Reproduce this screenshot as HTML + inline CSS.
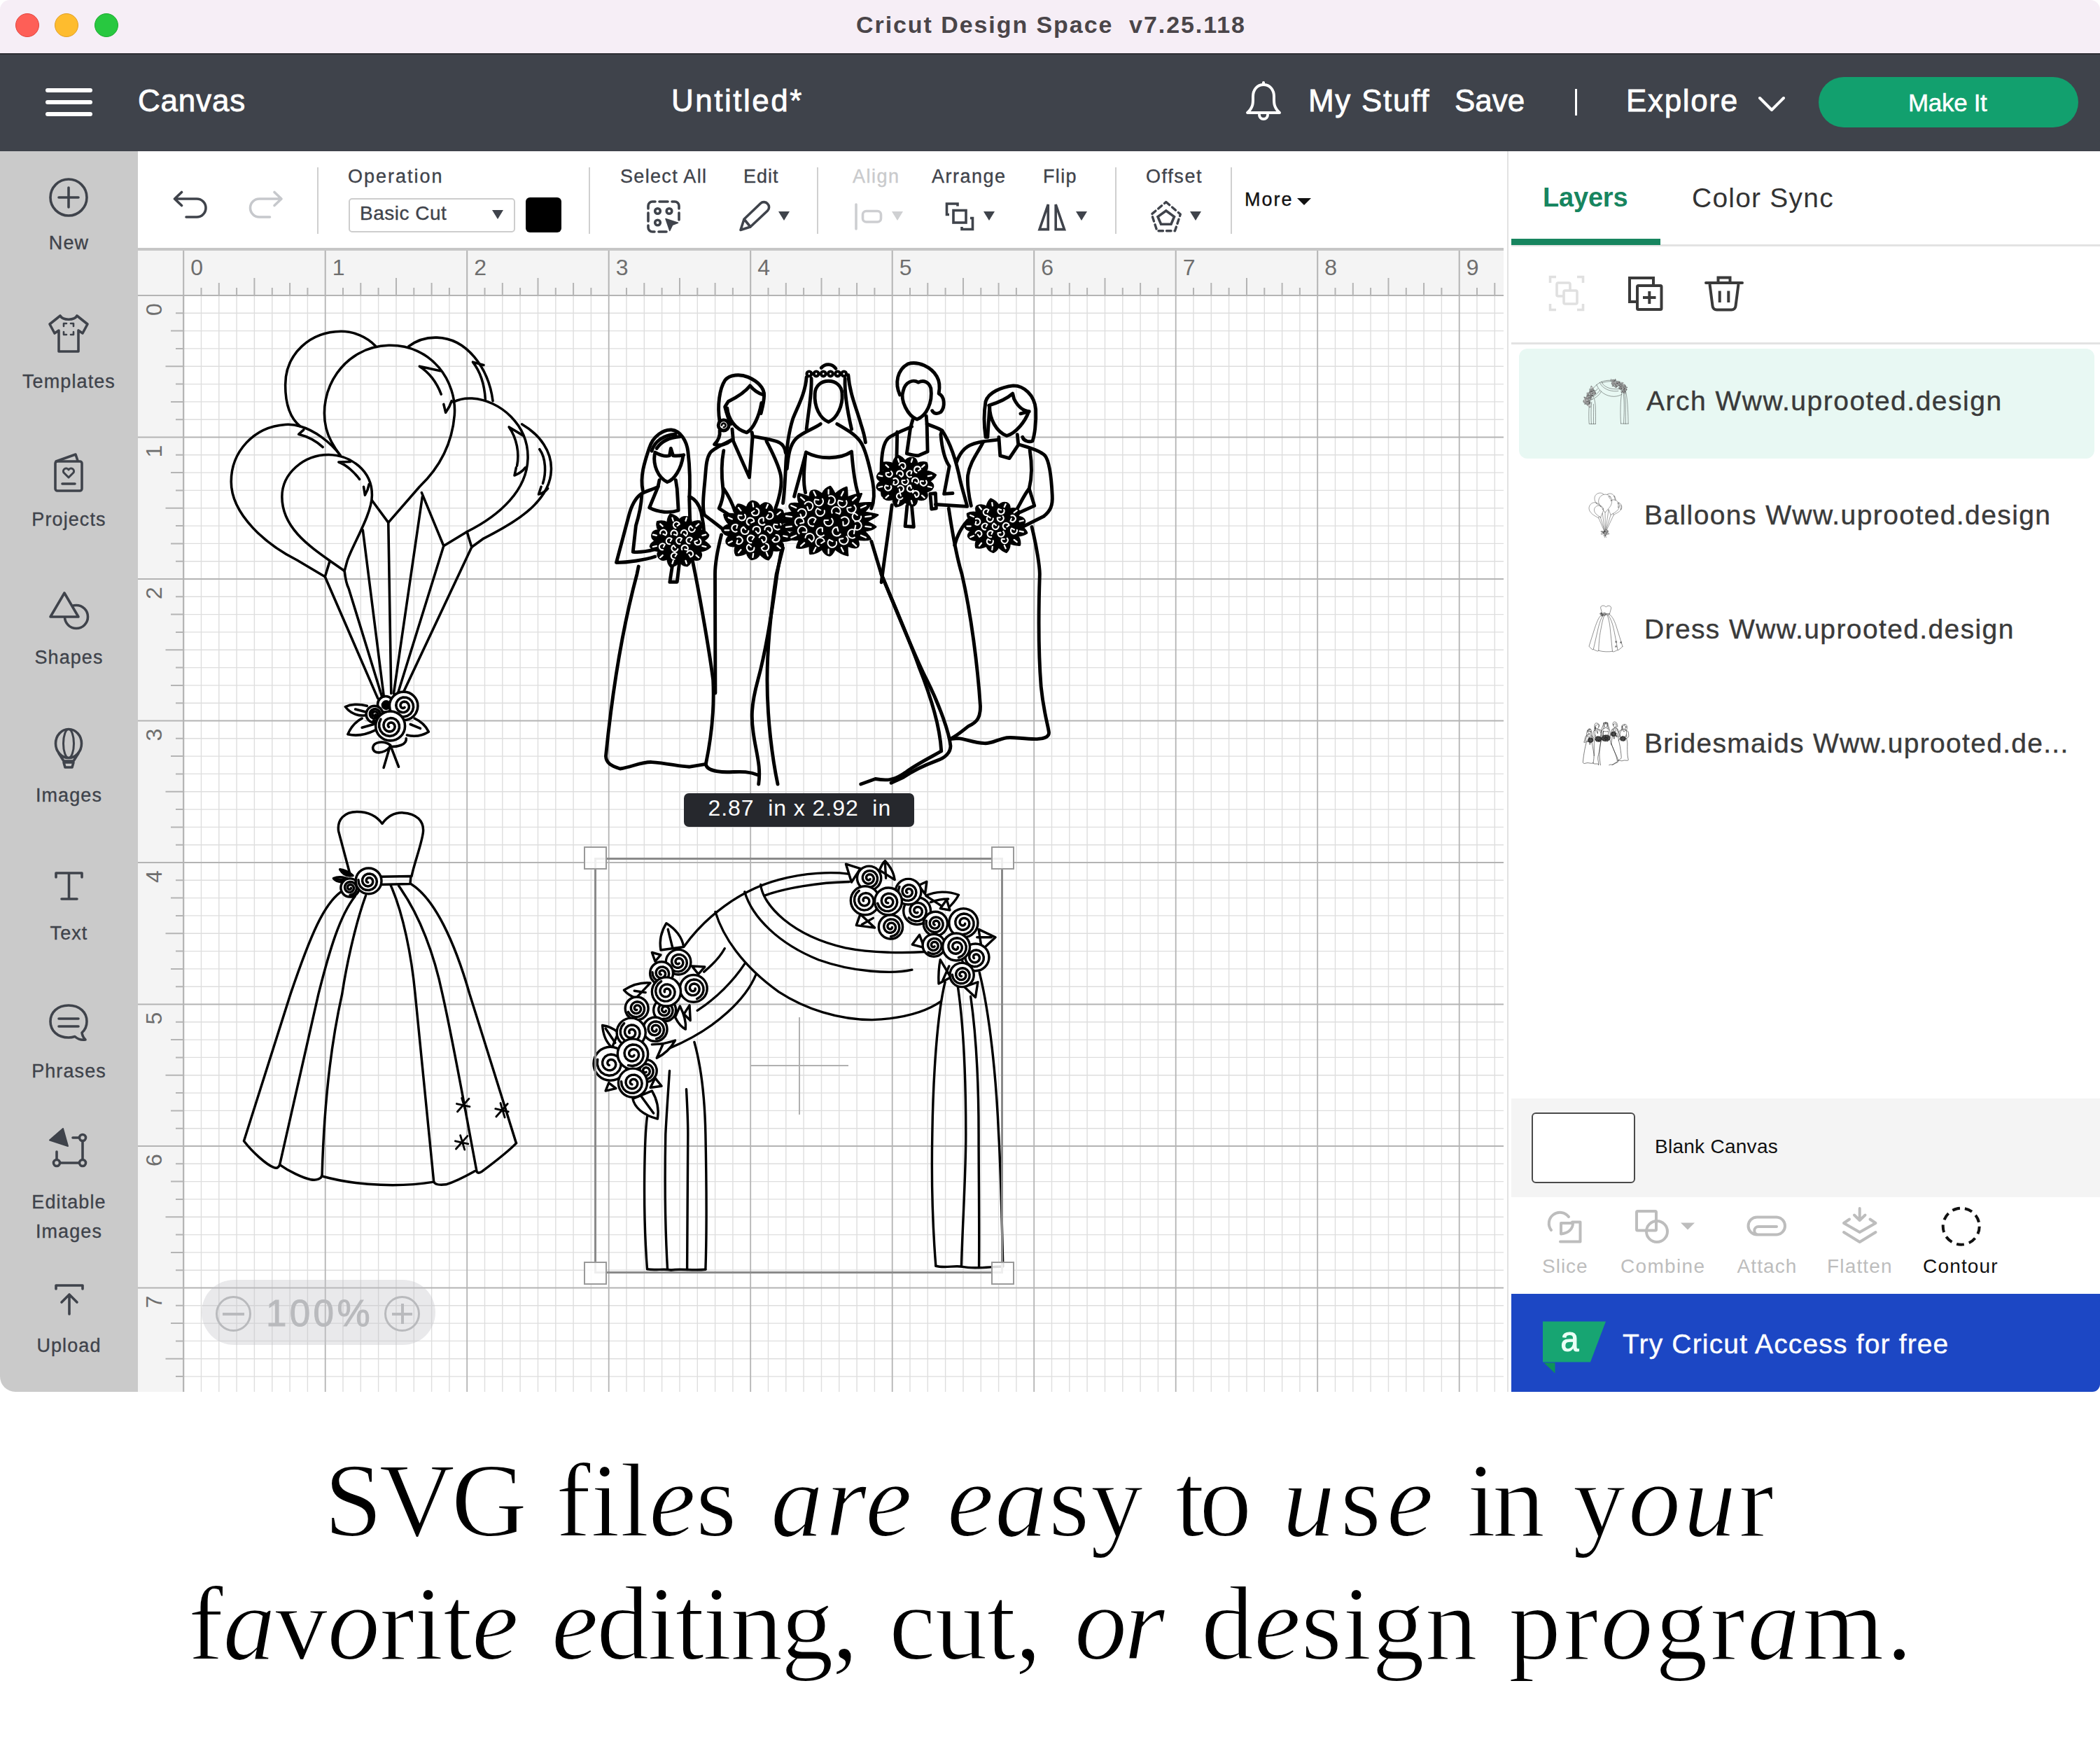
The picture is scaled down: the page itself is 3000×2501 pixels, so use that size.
<!DOCTYPE html>
<html lang="en">
<head>
<meta charset="utf-8">
<title>Cricut Design Space</title>
<style>
*{box-sizing:border-box;margin:0;padding:0}
html,body{width:3000px;height:2501px;overflow:hidden;background:#fff}
body{position:relative;font-family:"Liberation Sans",sans-serif;color:#3f434b}
.abs{position:absolute}
.t{position:absolute;white-space:nowrap;line-height:1}
#titlebar{left:0;top:0;width:3000px;height:76px;background:#f6eef6;border-radius:14px 14px 0 0}
.tl{position:absolute;width:34px;height:34px;border-radius:50%;top:19px}
#header{left:0;top:76px;width:3000px;height:140px;background:#3f434b;border-top:2px solid #2c2e33}
#sidebar{left:0;top:216px;width:197px;height:1772px;background:#cacaca;border-radius:0 0 0 22px}
.sl{position:absolute;left:0;width:197px;text-align:center;font-size:27px;line-height:1;color:#3f434b;letter-spacing:1.1px}
#toolbar{left:197px;top:216px;width:1956px;height:139px;background:#fff}
.sep{position:absolute;width:2px;height:95px;top:239px;background:#cfcfcf}
.tbl{position:absolute;font-size:27px;line-height:1;color:#3f434b;white-space:nowrap}
.tri{position:absolute;width:0;height:0;border-left:8px solid transparent;border-right:8px solid transparent;border-top:13px solid #3f434b}
#panel{left:2153px;top:216px;width:847px;height:1772px;background:#fff;border-left:2px solid #e2e2e2}
.lay{position:absolute;left:2352px;font-size:39px;line-height:1;color:#3a3a3a;white-space:nowrap}
.act{position:absolute;font-size:28px;line-height:1;color:#bdbdbd;white-space:nowrap}
.hnd{width:33px;height:33px;background:rgba(255,255,255,.85);border:2.5px solid #9a9a9a}
.cap{font-family:'Liberation Serif',serif;font-size:150px;color:#000;-webkit-text-stroke:2px #fff}
.hd{-webkit-text-stroke:.8px #fff}
.sl,.tbl{-webkit-text-stroke:.35px #3f434b}
.lay{-webkit-text-stroke:.4px #3a3a3a}
</style>
</head>
<body>
<!-- ===== title bar ===== -->
<div id="titlebar" class="abs">
  <div class="tl" style="left:22px;background:#fe5f57;border:1px solid #e2463f"></div>
  <div class="tl" style="left:78px;background:#febc2e;border:1px solid #e0a028"></div>
  <div class="tl" style="left:135px;background:#28c840;border:1px solid #1fab31"></div>
  <div class="t" id="ttl" style="left:1223px;top:18px;font-size:34px;font-weight:bold;color:#4a4549;white-space:pre;letter-spacing:1.93px">Cricut Design Space  v7.25.118</div>
</div>
<!-- ===== header ===== -->
<div id="header" class="abs"></div>
<div class="abs" style="left:65px;top:126px;width:67px;height:6px;border-radius:3px;background:#fff"></div>
<div class="abs" style="left:65px;top:143px;width:67px;height:6px;border-radius:3px;background:#fff"></div>
<div class="abs" style="left:65px;top:160px;width:67px;height:6px;border-radius:3px;background:#fff"></div>
<div class="t hd" id="h_canvas" style="left:197px;top:122px;font-size:44px;color:#fff;letter-spacing:0.80px">Canvas</div>
<div class="t hd" id="h_untitled" style="left:959px;top:122px;font-size:44px;color:#fff;letter-spacing:2.50px">Untitled*</div>
<div class="t hd" id="h_mystuff" style="left:1869px;top:122px;font-size:44px;color:#fff;letter-spacing:1.71px">My Stuff</div>
<div class="t hd" id="h_save" style="left:2078px;top:122px;font-size:44px;color:#fff;letter-spacing:0.00px">Save</div>
<div class="abs" style="left:2250px;top:127px;width:3px;height:38px;background:#fff"></div>
<div class="t hd" id="h_explore" style="left:2323px;top:122px;font-size:44px;color:#fff;letter-spacing:1.67px">Explore</div>
<div class="abs" id="makeit" style="left:2598px;top:110px;width:371px;height:72px;border-radius:36px;background:#12a06e"></div>
<div class="t" id="h_makeit" style="left:2726px;top:129px;font-size:35px;color:#fff;-webkit-text-stroke:.5px #fff;letter-spacing:-0.33px">Make It</div>
<!-- ===== sidebar ===== -->
<div id="sidebar" class="abs"></div>
<div class="sl" style="top:334px">New</div>
<div class="sl" style="top:532px">Templates</div>
<div class="sl" style="top:729px">Projects</div>
<div class="sl" style="top:926px">Shapes</div>
<div class="sl" style="top:1123px">Images</div>
<div class="sl" style="top:1320px">Text</div>
<div class="sl" style="top:1517px">Phrases</div>
<div class="sl" style="top:1704px">Editable</div>
<div class="sl" style="top:1746px">Images</div>
<div class="sl" style="top:1909px">Upload</div>
<!-- ===== toolbar ===== -->
<div id="toolbar" class="abs"></div>
<div class="sep" style="left:453px"></div>
<div class="sep" style="left:841px"></div>
<div class="sep" style="left:1167px"></div>
<div class="sep" style="left:1593px"></div>
<div class="sep" style="left:1758px"></div>
<div class="tbl" id="tb_op" style="left:497px;top:239px;letter-spacing:2.00px">Operation</div>
<div class="abs" style="left:498px;top:283px;width:238px;height:49px;border:2px solid #cdcdcd;border-radius:5px;background:#fff"></div>
<div class="tbl" id="tb_bc" style="left:514px;top:291px;font-size:28px;letter-spacing:0.50px">Basic Cut</div>
<div class="tri" style="left:703px;top:300px"></div>
<div class="abs" style="left:751px;top:282px;width:51px;height:50px;border-radius:6px;background:#000"></div>
<div class="tbl" id="tb_sa" style="left:886px;top:239px;letter-spacing:1.33px">Select All</div>
<div class="tbl" id="tb_ed" style="left:1062px;top:239px;letter-spacing:1.00px">Edit</div>
<div class="tri" style="left:1112px;top:302px"></div>
<div class="tbl" id="tb_al" style="left:1218px;top:239px;color:#c9cacc;-webkit-text-stroke-color:#c9cacc;letter-spacing:1.50px">Align</div>
<div class="tri" style="left:1274px;top:302px;border-top-color:#cfd0d2"></div>
<div class="tbl" id="tb_ar" style="left:1331px;top:239px;letter-spacing:1.50px">Arrange</div>
<div class="tri" style="left:1405px;top:302px"></div>
<div class="tbl" id="tb_fl" style="left:1490px;top:239px;letter-spacing:1.33px">Flip</div>
<div class="tri" style="left:1537px;top:302px"></div>
<div class="tbl" id="tb_of" style="left:1637px;top:239px;letter-spacing:1.60px">Offset</div>
<div class="tri" style="left:1700px;top:302px"></div>
<div class="tbl" id="tb_mo" style="-webkit-text-stroke-color:#111;left:1778px;top:272px;color:#111;letter-spacing:2.00px">More</div>
<div class="tri" style="left:1853px;top:283px;border-top-color:#111;border-left-width:10px;border-right-width:10px;border-top-width:10px"></div>
<svg class="abs" style="left:0;top:0" width="3000" height="2501" viewBox="0 0 3000 2501" shape-rendering="auto">
<rect x="197" y="354" width="1951" height="4" fill="#c6c6c6"/>
<rect x="197" y="358" width="1951" height="1630" fill="#fff"/>
<rect x="197" y="358" width="1951" height="64.0" fill="#f4f4f4"/>
<rect x="197" y="358" width="65.19999999999999" height="1630" fill="#f4f4f4"/>
<path d="M287.5 422.0V1988M312.8 422.0V1988M338.1 422.0V1988M363.4 422.0V1988M388.8 422.0V1988M414.1 422.0V1988M439.4 422.0V1988M490.0 422.0V1988M515.3 422.0V1988M540.6 422.0V1988M566.0 422.0V1988M591.3 422.0V1988M616.6 422.0V1988M641.9 422.0V1988M692.5 422.0V1988M717.8 422.0V1988M743.1 422.0V1988M768.5 422.0V1988M793.8 422.0V1988M819.1 422.0V1988M844.4 422.0V1988M895.0 422.0V1988M920.3 422.0V1988M945.6 422.0V1988M971.0 422.0V1988M996.3 422.0V1988M1021.6 422.0V1988M1046.9 422.0V1988M1097.5 422.0V1988M1122.8 422.0V1988M1148.1 422.0V1988M1173.5 422.0V1988M1198.8 422.0V1988M1224.1 422.0V1988M1249.4 422.0V1988M1300.0 422.0V1988M1325.3 422.0V1988M1350.6 422.0V1988M1376.0 422.0V1988M1401.3 422.0V1988M1426.6 422.0V1988M1451.9 422.0V1988M1502.5 422.0V1988M1527.8 422.0V1988M1553.1 422.0V1988M1578.5 422.0V1988M1603.8 422.0V1988M1629.1 422.0V1988M1654.4 422.0V1988M1705.0 422.0V1988M1730.3 422.0V1988M1755.6 422.0V1988M1781.0 422.0V1988M1806.3 422.0V1988M1831.6 422.0V1988M1856.9 422.0V1988M1907.5 422.0V1988M1932.8 422.0V1988M1958.1 422.0V1988M1983.5 422.0V1988M2008.8 422.0V1988M2034.1 422.0V1988M2059.4 422.0V1988M2110.0 422.0V1988M2135.3 422.0V1988M262.2 447.3H2148M262.2 472.6H2148M262.2 497.9H2148M262.2 523.2H2148M262.2 548.6H2148M262.2 573.9H2148M262.2 599.2H2148M262.2 649.8H2148M262.2 675.1H2148M262.2 700.4H2148M262.2 725.8H2148M262.2 751.1H2148M262.2 776.4H2148M262.2 801.7H2148M262.2 852.3H2148M262.2 877.6H2148M262.2 902.9H2148M262.2 928.2H2148M262.2 953.6H2148M262.2 978.9H2148M262.2 1004.2H2148M262.2 1054.8H2148M262.2 1080.1H2148M262.2 1105.4H2148M262.2 1130.8H2148M262.2 1156.1H2148M262.2 1181.4H2148M262.2 1206.7H2148M262.2 1257.3H2148M262.2 1282.6H2148M262.2 1307.9H2148M262.2 1333.2H2148M262.2 1358.6H2148M262.2 1383.9H2148M262.2 1409.2H2148M262.2 1459.8H2148M262.2 1485.1H2148M262.2 1510.4H2148M262.2 1535.8H2148M262.2 1561.1H2148M262.2 1586.4H2148M262.2 1611.7H2148M262.2 1662.3H2148M262.2 1687.6H2148M262.2 1712.9H2148M262.2 1738.2H2148M262.2 1763.6H2148M262.2 1788.9H2148M262.2 1814.2H2148M262.2 1864.8H2148M262.2 1890.1H2148M262.2 1915.4H2148M262.2 1940.8H2148M262.2 1966.1H2148" stroke="#dedede" stroke-width="1.4" fill="none"/>
<path d="M262.2 422.0V1988M464.7 422.0V1988M667.2 422.0V1988M869.7 422.0V1988M1072.2 422.0V1988M1274.7 422.0V1988M1477.2 422.0V1988M1679.7 422.0V1988M1882.2 422.0V1988M2084.7 422.0V1988M262.2 422.0H2148M262.2 624.5H2148M262.2 827.0H2148M262.2 1029.5H2148M262.2 1232.0H2148M262.2 1434.5H2148M262.2 1637.0H2148M262.2 1839.5H2148" stroke="#b4b4b4" stroke-width="1.8" fill="none"/>
<path d="M262.2 358V422.0M287.5 411V422.0M312.8 404V422.0M338.1 411V422.0M363.4 397V422.0M388.8 411V422.0M414.1 404V422.0M439.4 411V422.0M464.7 358V422.0M490.0 411V422.0M515.3 404V422.0M540.6 411V422.0M566.0 397V422.0M591.3 411V422.0M616.6 404V422.0M641.9 411V422.0M667.2 358V422.0M692.5 411V422.0M717.8 404V422.0M743.1 411V422.0M768.5 397V422.0M793.8 411V422.0M819.1 404V422.0M844.4 411V422.0M869.7 358V422.0M895.0 411V422.0M920.3 404V422.0M945.6 411V422.0M971.0 397V422.0M996.3 411V422.0M1021.6 404V422.0M1046.9 411V422.0M1072.2 358V422.0M1097.5 411V422.0M1122.8 404V422.0M1148.1 411V422.0M1173.5 397V422.0M1198.8 411V422.0M1224.1 404V422.0M1249.4 411V422.0M1274.7 358V422.0M1300.0 411V422.0M1325.3 404V422.0M1350.6 411V422.0M1376.0 397V422.0M1401.3 411V422.0M1426.6 404V422.0M1451.9 411V422.0M1477.2 358V422.0M1502.5 411V422.0M1527.8 404V422.0M1553.1 411V422.0M1578.5 397V422.0M1603.8 411V422.0M1629.1 404V422.0M1654.4 411V422.0M1679.7 358V422.0M1705.0 411V422.0M1730.3 404V422.0M1755.6 411V422.0M1781.0 397V422.0M1806.3 411V422.0M1831.6 404V422.0M1856.9 411V422.0M1882.2 358V422.0M1907.5 411V422.0M1932.8 404V422.0M1958.1 411V422.0M1983.5 397V422.0M2008.8 411V422.0M2034.1 404V422.0M2059.4 411V422.0M2084.7 358V422.0M2110.0 411V422.0M2135.3 404V422.0M197 422.0H262.2M251 447.3H262.2M244 472.6H262.2M251 497.9H262.2M236.5 523.2H262.2M251 548.6H262.2M244 573.9H262.2M251 599.2H262.2M197 624.5H262.2M251 649.8H262.2M244 675.1H262.2M251 700.4H262.2M236.5 725.8H262.2M251 751.1H262.2M244 776.4H262.2M251 801.7H262.2M197 827.0H262.2M251 852.3H262.2M244 877.6H262.2M251 902.9H262.2M236.5 928.2H262.2M251 953.6H262.2M244 978.9H262.2M251 1004.2H262.2M197 1029.5H262.2M251 1054.8H262.2M244 1080.1H262.2M251 1105.4H262.2M236.5 1130.8H262.2M251 1156.1H262.2M244 1181.4H262.2M251 1206.7H262.2M197 1232.0H262.2M251 1257.3H262.2M244 1282.6H262.2M251 1307.9H262.2M236.5 1333.2H262.2M251 1358.6H262.2M244 1383.9H262.2M251 1409.2H262.2M197 1434.5H262.2M251 1459.8H262.2M244 1485.1H262.2M251 1510.4H262.2M236.5 1535.8H262.2M251 1561.1H262.2M244 1586.4H262.2M251 1611.7H262.2M197 1637.0H262.2M251 1662.3H262.2M244 1687.6H262.2M251 1712.9H262.2M236.5 1738.2H262.2M251 1763.6H262.2M244 1788.9H262.2M251 1814.2H262.2M197 1839.5H262.2M251 1864.8H262.2M244 1890.1H262.2M251 1915.4H262.2M236.5 1940.8H262.2M251 1966.1H262.2M197 422.0H2148M262.2 358V1988" stroke="#b4b4b4" stroke-width="2" fill="none"/>
<g font-family="Liberation Sans, sans-serif" font-size="32" fill="#6e6e6e">
<text x="272.2" y="393">0</text>
<text x="474.7" y="393">1</text>
<text x="677.2" y="393">2</text>
<text x="879.7" y="393">3</text>
<text x="1082.2" y="393">4</text>
<text x="1284.7" y="393">5</text>
<text x="1487.2" y="393">6</text>
<text x="1689.7" y="393">7</text>
<text x="1892.2" y="393">8</text>
<text x="2094.7" y="393">9</text>
<text transform="translate(231 451.0) rotate(-90)">0</text>
<text transform="translate(231 653.5) rotate(-90)">1</text>
<text transform="translate(231 856.0) rotate(-90)">2</text>
<text transform="translate(231 1058.5) rotate(-90)">3</text>
<text transform="translate(231 1261.0) rotate(-90)">4</text>
<text transform="translate(231 1463.5) rotate(-90)">5</text>
<text transform="translate(231 1666.0) rotate(-90)">6</text>
<text transform="translate(231 1868.5) rotate(-90)">7</text>
</g>
</svg>
<!-- ===== canvas art ===== -->
<svg class="abs" style="left:0;top:0" width="3000" height="2501" viewBox="0 0 3000 2501">
<g id="artBal" transform="translate(310 450) scale(0.238095)" stroke="#000" stroke-width="15" fill="none" stroke-linecap="round" stroke-linejoin="round">
<path d="M950 185 C900 130 820 98 745 98 C560 100 410 230 410 420 C410 530 440 620 500 668"/>
<path d="M1150 188 C1200 150 1260 133 1320 135 C1500 140 1630 320 1655 515"/>
<path d="M1600 300 L1535 282 C1580 340 1605 420 1610 505"/>
<path d="M740 842 C700 790 670 740 655 680 C600 450 760 190 1030 182 C1290 176 1440 400 1425 600 C1410 780 1330 920 1215 1030 L1028 1245 L930 1112"/>
<path d="M1340 335 L1215 308 C1280 350 1320 410 1345 475"/>
<path d="M1360 535 L1372 585 C1390 560 1400 540 1408 515"/>
<path d="M1418 522 C1450 505 1490 498 1530 500 C1700 510 1870 660 1865 860 C1860 1050 1700 1200 1500 1300 L1360 1385 L1228 1065"/>
<path d="M1835 722 L1752 672 C1800 740 1815 830 1800 905"/>
<path d="M1795 915 L1785 962 C1815 950 1835 935 1850 915"/>
<path d="M1830 655 C1940 720 2010 820 2005 930 C2000 1130 1760 1260 1600 1340 L1528 1392 L1500 1300"/>
<path d="M1935 805 C1975 860 1975 950 1955 1010"/>
<path d="M1945 1030 L1930 1075 C1950 1070 1970 1060 1985 1040"/>
<path d="M740 842 C680 760 580 690 500 668 C470 658 440 655 410 657 C220 670 85 820 85 1000 C85 1200 300 1380 480 1470 L648 1570 L675 1482"/>
<path d="M520 688 L490 715 C550 730 600 760 635 792"/>
<path d="M765 1535 L700 1490 C560 1390 390 1280 390 1090 C390 950 520 838 670 838 C800 840 930 930 930 1080 C930 1200 800 1400 780 1480 Z"/>
<path d="M800 880 L730 882 C780 900 830 950 855 985"/>
<path d="M880 1030 L888 1080 C900 1060 908 1040 912 1015"/>
<path d="M648 1570 L965 2300"/>
<path d="M765 1535 C770 1580 780 1620 790 1640 L990 2290"/>
<path d="M875 1290 L1000 2280"/>
<path d="M1028 1245 L1045 2270"/>
<path d="M1232 1090 L1060 2270"/>
<path d="M1360 1385 L1085 2270"/>
<path d="M1528 1392 L1120 2260"/>
<path d="M900 2345 C850 2330 800 2335 770 2350 C800 2390 850 2410 895 2400" fill="#fff"/><path d="M830 2365 L890 2380"/>
<path d="M870 2420 C830 2440 800 2480 785 2515 C850 2530 910 2510 950 2490" fill="#fff"/><path d="M870 2475 L940 2455"/>
<path d="M1185 2420 C1230 2440 1255 2470 1270 2500 C1230 2525 1180 2530 1140 2520" fill="#fff"/><path d="M1160 2455 L1220 2480"/>
<path d="M1040 2580 C1000 2550 940 2560 935 2595 C935 2635 1000 2635 1040 2590 C1080 2590 1140 2580 1135 2540 M1040 2580 L1000 2715 M1040 2580 L1090 2710"/>
<circle cx="1012" cy="2335" r="48" fill="#fff"/><circle cx="1015" cy="2340" r="22" fill="#000"/>
<circle cx="945" cy="2395" r="50" fill="#fff"/><path d="M950.3 2397.9L949.5 2400.2L947.7 2402.2L945.1 2403.6L941.8 2403.9L938.3 2402.9L935.2 2400.5L933.1 2396.9L932.3 2392.5L933.2 2387.8L935.9 2383.4L940.2 2380.2L945.7 2378.6L951.7 2379.0L957.4 2381.7L962.0 2386.4L964.8 2392.8L965.2 2400.0L962.9 2407.2L958.1 2413.4L951.1 2417.6L942.8 2419.2L934.2 2417.7L926.3 2413.2L920.4 2405.9L917.3 2396.8L917.5 2386.8L921.4 2377.2L928.6 2369.4L938.3 2364.5L949.4 2363.1L960.6 2365.9L970.4 2372.5L977.4 2382.4L980.6 2394.4L979.4 2407.1L973.8 2418.9L964.1 2428.1L951.6 2433.6L937.6 2434.3"/>
<circle cx="1120" cy="2345" r="85" fill="#fff"/><path d="M1125.5 2353.6L1122.5 2356.4L1118.2 2358.0L1113.1 2357.9L1107.9 2355.7L1103.6 2351.4L1100.9 2345.3L1100.6 2338.1L1103.0 2330.9L1108.3 2324.6L1115.8 2320.3L1124.9 2319.0L1134.4 2321.0L1143.0 2326.6L1149.4 2335.2L1152.4 2346.1L1151.4 2357.8L1146.1 2368.9L1136.8 2377.8L1124.6 2383.1L1110.7 2383.7L1097.0 2379.4L1085.3 2370.1L1077.3 2356.9L1074.4 2341.3L1077.2 2325.0L1085.7 2310.4L1099.3 2299.3L1116.3 2293.4L1134.9 2293.9L1152.5 2301.1L1167.0 2314.3L1176.2 2332.2L1178.6 2352.7L1173.6 2373.2L1161.5 2391.2L1143.4 2404.1L1121.5 2410.0L1098.4 2407.9L1076.9 2397.6"/>
<circle cx="1040" cy="2465" r="88" fill="#fff"/><path d="M1031.5 2471.3L1028.4 2468.4L1026.4 2464.1L1026.2 2458.8L1028.1 2453.3L1032.2 2448.5L1038.3 2445.3L1045.7 2444.5L1053.3 2446.5L1060.2 2451.4L1065.2 2458.9L1067.3 2468.2L1065.8 2478.1L1060.7 2487.4L1052.2 2494.6L1041.3 2498.6L1029.1 2498.4L1017.2 2493.7L1007.4 2484.8L1001.0 2472.5L999.3 2458.3L1002.8 2443.8L1011.5 2431.0L1024.6 2421.8L1040.5 2417.6L1057.5 2419.3L1073.3 2427.1L1085.7 2440.2L1093.0 2457.4L1093.8 2476.6L1087.7 2495.4L1075.2 2511.3L1057.4 2522.1L1036.4 2526.1L1014.8 2522.4L995.4 2511.2L980.7 2493.5L973.0 2471.3L973.5 2447.3L982.5 2424.4"/>
</g>
<g id="artDress" transform="translate(330 1140) scale(0.204763)" stroke="#000" stroke-width="17" fill="none" stroke-linecap="round" stroke-linejoin="round">
<path d="M830 530 L750 230 C740 150 790 95 880 95 C960 95 1020 130 1055 178 C1090 130 1140 100 1200 102 C1290 105 1350 160 1340 240 C1330 320 1280 450 1260 545"/>
<path d="M1030 548 L1255 545 L1250 598 L1035 603"/>
<path d="M765 655 C650 740 560 940 415 1367 L90 2392 C150 2470 250 2560 300 2577 C320 2585 335 2575 340 2557"/>
<path d="M865 685 C760 820 690 1050 610 1367 L340 2557 C400 2600 500 2650 555 2660 C600 2668 630 2655 635 2632"/>
<path d="M940 680 C860 900 800 1200 775 1367 C700 1700 650 2100 635 2637 C900 2710 1200 2712 1415 2677"/>
<path d="M1115 610 C1200 800 1260 1100 1285 1367 L1415 2677 C1425 2700 1460 2700 1500 2695 C1580 2670 1650 2630 1700 2602"/>
<path d="M1170 612 C1320 820 1420 1100 1475 1367 C1550 1700 1620 2100 1715 2607 C1725 2618 1740 2612 1750 2605 C1850 2530 1930 2470 1990 2407"/>
<path d="M1255 598 C1420 700 1560 1000 1665 1367 L1990 2407"/>
<path d="M1580 2187 L1660 2097 M1575 2132 L1665 2152 M1610 2092 L1640 2192" stroke-width="14"/>
<path d="M1570 2447 L1650 2357 M1565 2392 L1655 2412 M1600 2352 L1630 2452" stroke-width="14"/>
<path d="M1850 2222 L1930 2132 M1845 2167 L1935 2187 M1880 2127 L1910 2227" stroke-width="14"/>
<path d="M760 497 C790 500 820 515 850 540 C810 548 780 530 760 497 Z" fill="#fff"/><path d="M775 505 L830 535"/>
<path d="M715 560 C750 545 790 550 830 570 C790 592 740 590 715 560 Z" fill="#fff"/><path d="M735 565 L810 572"/>
<circle cx="830" cy="625" r="64" fill="#fff"/><path d="M837.3 627.3L837.0 630.4L835.3 633.4L832.3 635.8L828.2 637.0L823.6 636.6L819.1 634.4L815.5 630.5L813.4 625.1L813.3 619.0L815.6 612.8L820.2 607.6L826.7 604.2L834.3 603.2L842.2 605.1L849.2 609.9L854.3 617.2L856.6 626.1L855.6 635.7L851.1 644.7L843.5 651.8L833.4 655.9L822.2 656.3L811.2 652.6L801.9 645.0L795.7 634.3L793.5 621.7L795.9 608.7L802.9 597.1L813.8 588.4L827.4 583.9L842.2 584.5L856.1 590.4L867.5 601.0L874.6 615.2L876.3 631.5L872.1 647.7L862.4 661.7L848.0 671.7L830.7 676.2"/>
<circle cx="960" cy="578" r="90" fill="#fff"/><path d="M955.5 587.8L951.3 586.8L947.3 583.8L944.5 579.2L943.6 573.3L944.9 567.0L948.8 561.2L955.0 556.8L962.9 554.8L971.5 555.9L979.6 560.2L986.0 567.5L989.6 577.1L989.6 587.9L985.5 598.6L977.6 607.5L966.5 613.3L953.6 614.9L940.4 611.8L928.7 603.9L920.2 591.9L916.3 577.2L917.8 561.5L925.0 546.8L937.2 535.2L953.3 528.4L971.2 527.6L988.9 533.4L1003.8 545.2L1014.0 562.0L1017.7 581.9L1014.3 602.3L1003.6 620.7L986.7 634.6L965.5 641.9L942.6 641.4L920.8 632.7L902.9 616.5L891.6 594.7L888.5 569.7"/>
</g>
<g id="artArch"><g transform="translate(960 1230) scale(0.190476)" stroke="#000" stroke-width="17.5" fill="none" stroke-linecap="round" stroke-linejoin="round">
<path d="M90 640 C250 420 500 220 800 140 C1000 85 1200 80 1320 95"/>
<path d="M695 258 C850 200 1100 160 1330 155"/>
<path d="M665 175 C680 330 900 560 1300 650 C1500 690 1750 690 1900 680"/>
<path d="M545 230 C600 420 800 620 1100 740 C1350 830 1650 850 1800 815"/>
<path d="M325 380 C380 560 520 780 800 980 C1000 1110 1250 1190 1500 1190 C1750 1180 1920 1120 2018 1051"/>
<path d="M395 655 C360 720 300 780 240 830"/>
<path d="M545 770 C460 900 330 1030 190 1120"/>
<path d="M630 850 C560 1020 350 1250 -24 1405"/>
</g>
<g transform="translate(840 1220) scale(0.228441)" stroke="#000" stroke-width="15" fill="none" stroke-linecap="round" stroke-linejoin="round">
<path d="M665 1175 C700 1300 730 1500 735 1751 C 740 2000 745 2300 735 2595"/>
<path d="M510 1355 C500 1500 490 1650 485 1751 C 480 2000 480 2300 497 2595"/>
<path d="M615 1470 C620 1560 625 1650 625 1751 C 625 2000 620 2300 620 2598"/>
<path d="M370 1640 C355 1751 340 2200 370 2595 C 420 2605 470 2590 520 2600 C 580 2590 650 2605 735 2597"/>
<path d="M2233 800 C2183 1000 2158 1400 2153 1751 C 2148 2000 2153 2300 2175 2575"/>
<path d="M2313 830 C2353 1100 2363 1400 2363 1751 C 2363 2000 2343 2300 2335 2575"/>
<path d="M2393 890 C2423 1100 2443 1400 2443 1751 C 2443 2000 2448 2300 2445 2585"/>
<path d="M2448 740 C2513 1000 2553 1400 2568 1751 C 2583 2000 2588 2300 2595 2575"/>
<path d="M2175 2575 C2233 2590 2293 2570 2343 2580 C2413 2595 2513 2580 2595 2578"/>
<path d="M455 600 C445 540 460 480 490 432 C545 465 590 520 598 580 Z" fill="#fff"/><path d="M500 470 L530 590"/>
<path d="M400 615 L455 630 L420 670 Z" fill="#fff"/>
<path d="M650 700 L730 705 L690 750 Z" fill="#fff"/>
<path d="M390 805 C330 800 270 820 225 850 C250 880 270 890 300 900 Z" fill="#fff"/><path d="M290 855 L360 865"/>
<path d="M575 950 C600 1000 615 1050 610 1095 C580 1080 560 1050 545 1020 Z" fill="#fff"/>
<path d="M635 945 L640 1040 L600 1000 Z" fill="#fff"/>
<path d="M90 1070 C130 1075 160 1090 190 1115 L150 1210 C110 1170 95 1130 90 1070 Z" fill="#fff"/><path d="M110 1090 L170 1180"/>
<path d="M470 1185 C510 1175 530 1170 545 1165 C520 1210 480 1250 430 1275 Z" fill="#fff"/><path d="M400 1190 L470 1185"/>
<path d="M130 1430 L110 1480 L175 1465 Z" fill="#fff"/>
<path d="M420 1400 L460 1450 L390 1460 Z" fill="#fff"/>
<path d="M280 1530 C290 1580 340 1630 435 1655 C445 1590 430 1530 400 1480 Z" fill="#fff"/><path d="M330 1510 L410 1620"/>
<circle cx="660" cy="840" r="85" fill="#fff"/><path d="M670.2 840.0L671.0 844.1L670.0 848.6L667.1 852.8L662.5 855.9L656.5 857.3L649.9 856.2L643.8 852.6L639.0 846.6L636.5 838.9L637.0 830.2L640.7 821.8L647.6 814.9L656.9 810.7L667.6 810.0L678.4 813.3L687.8 820.5L694.2 831.0L696.7 843.6L694.5 856.7L687.6 868.7L676.5 877.9L662.4 882.7L647.0 882.3L632.2 876.4L620.1 865.3L612.3 850.1L610.3 832.7L614.6 815.2L625.1 799.9L640.6 788.9L659.5 783.9L679.6 785.8L698.1 794.8L712.7 810.1L721.3 830.0L722.4 852.2L715.5 873.9L701.2 892.2L681.0 904.7"/>
<circle cx="565" cy="675" r="78" fill="#fff"/><path d="M570.1 682.9L567.3 685.5L563.3 687.0L558.6 686.8L553.9 684.8L549.9 680.8L547.5 675.3L547.2 668.7L549.4 662.1L554.2 656.3L561.2 652.4L569.5 651.1L578.2 653.0L586.1 658.1L591.9 666.0L594.7 676.0L593.8 686.8L588.9 697.0L580.5 705.1L569.2 709.9L556.5 710.6L543.9 706.5L533.2 698.1L525.9 685.9L523.1 671.6L525.7 656.7L533.5 643.2L546.0 633.0L561.6 627.7L578.6 628.1L594.9 634.7L608.1 646.8L616.6 663.2L618.8 682.0L614.2 700.9L603.1 717.4L586.5 729.2L566.4 734.7L545.1 732.7L525.5 723.3"/>
<circle cx="460" cy="745" r="72" fill="#fff"/><path d="M456.4 752.9L453.0 752.0L449.9 749.7L447.6 746.0L446.9 741.3L448.0 736.2L451.1 731.5L456.0 728.0L462.3 726.5L469.2 727.3L475.7 730.7L480.8 736.6L483.7 744.3L483.7 753.0L480.4 761.5L474.1 768.6L465.2 773.2L454.9 774.5L444.3 772.0L435.0 765.7L428.1 756.1L425.0 744.4L426.2 731.8L432.0 720.1L441.8 710.8L454.6 705.3L469.0 704.7L483.1 709.3L495.1 718.8L503.2 732.2L506.2 748.1L503.4 764.4L494.9 779.2L481.4 790.3L464.4 796.1L446.1 795.7L428.6 788.7L414.3 775.8L405.3 758.4L402.8 738.4"/>
<circle cx="480" cy="975" r="70" fill="#fff"/><path d="M487.4 979.0L486.3 982.3L483.8 985.1L480.1 987.1L475.5 987.5L470.6 986.1L466.3 982.7L463.3 977.7L462.2 971.5L463.5 964.9L467.2 958.8L473.3 954.2L480.9 952.0L489.3 952.6L497.4 956.3L503.9 963.0L507.8 971.9L508.3 982.0L505.1 992.1L498.3 1000.7L488.6 1006.7L477.0 1008.9L464.9 1006.8L453.9 1000.5L445.6 990.3L441.2 977.5L441.5 963.5L447.0 950.1L457.0 939.2L470.6 932.2L486.2 930.4L501.8 934.2L515.5 943.6L525.4 957.4L529.9 974.2L528.2 992.0L520.3 1008.4L506.8 1021.4L489.2 1029.0L469.7 1030.0"/>
<circle cx="490" cy="860" r="90" fill="#fff"/><path d="M479.3 861.5L477.9 857.4L478.2 852.5L480.6 847.6L485.0 843.7L491.1 841.4L498.1 841.5L505.1 844.3L511.1 849.9L514.8 857.7L515.6 866.8L512.9 876.2L506.7 884.4L497.6 890.3L486.5 892.6L474.7 890.7L463.8 884.6L455.5 874.6L451.0 861.8L451.3 847.6L456.8 834.0L467.0 822.8L481.1 815.6L497.3 813.7L513.7 817.7L528.1 827.6L538.5 842.3L543.2 860.2L541.3 879.2L532.6 896.8L518.0 910.7L498.9 918.8L477.6 919.7L456.8 913.1L439.2 899.2L427.3 879.6L422.8 856.5L426.7 832.8L439.0 811.4L458.3 795.3"/>
<circle cx="305" cy="965" r="72" fill="#fff"/><path d="M305.6 973.6L302.2 974.5L298.4 974.0L294.6 971.8L291.7 968.0L290.2 963.1L290.7 957.5L293.4 952.0L298.1 947.6L304.6 945.1L311.9 945.0L319.2 947.6L325.5 953.0L329.6 960.6L330.8 969.7L328.7 979.0L323.1 987.3L314.7 993.4L304.2 996.2L292.9 995.2L282.4 990.0L274.0 981.2L269.0 969.6L268.5 956.5L272.6 943.7L281.3 932.8L293.6 925.3L308.2 922.6L323.2 925.2L336.8 933.1L347.0 945.6L352.4 961.3L352.0 978.3L345.5 994.5L333.4 1007.8L317.1 1016.2L298.4 1018.4L279.7 1013.9L263.4 1003.0L251.6 986.6"/>
<circle cx="140" cy="1310" r="105" fill="#fff"/><path d="M132.6 1320.2L128.0 1318.0L124.2 1313.8L122.0 1307.8L122.3 1300.9L125.3 1293.9L131.1 1288.1L139.2 1284.6L148.7 1284.2L158.2 1287.3L166.5 1294.1L172.2 1304.0L174.1 1315.9L171.5 1328.2L164.4 1339.4L153.3 1347.8L139.3 1351.9L124.1 1350.7L109.8 1344.1L98.2 1332.3L91.2 1316.7L90.2 1298.9L95.6 1281.3L107.2 1266.2L123.9 1255.8L143.8 1251.8L164.5 1255.0L183.4 1265.6L197.7 1282.7L205.4 1304.2L205.1 1327.8L196.4 1350.4L179.9 1368.9L157.4 1380.9L131.5 1384.4L105.4 1378.4L82.5 1363.4L65.8 1340.8L57.9 1313.2L60.1 1284.0"/>
<circle cx="420" cy="1095" r="75" fill="#fff"/><path d="M428.8 1096.8L428.8 1100.4L427.1 1104.2L423.9 1107.3L419.3 1109.2L413.9 1109.3L408.4 1107.3L403.7 1103.1L400.6 1097.1L399.9 1089.9L401.8 1082.5L406.5 1075.9L413.7 1071.1L422.5 1069.1L431.9 1070.4L440.6 1075.1L447.4 1083.0L451.2 1093.2L451.1 1104.5L446.9 1115.5L438.8 1124.7L427.6 1130.7L414.6 1132.4L401.3 1129.3L389.6 1121.6L381.0 1109.8L377.0 1095.4L378.3 1080.0L385.1 1065.6L396.8 1054.2L412.2 1047.4L429.5 1046.4L446.4 1051.6L460.9 1062.6L470.8 1078.4L474.7 1097.1L471.8 1116.5L462.1 1134.0L446.5 1147.4L426.8 1154.6"/>
<circle cx="270" cy="1115" r="90" fill="#fff"/><path d="M259.8 1118.6L257.6 1114.8L257.0 1110.0L258.4 1104.8L261.9 1100.0L267.4 1096.5L274.3 1095.2L281.7 1096.6L288.6 1100.9L293.9 1107.8L296.4 1116.6L295.7 1126.3L291.3 1135.6L283.5 1143.1L273.0 1147.6L261.1 1148.2L249.2 1144.3L239.1 1136.1L232.1 1124.5L229.6 1110.6L232.3 1096.1L240.1 1083.1L252.4 1073.2L268.0 1068.2L284.8 1068.9L300.9 1075.6L314.0 1088.0L322.1 1104.6L324.1 1123.6L319.1 1142.6L307.5 1159.1L290.4 1170.8L269.7 1176.0L248.0 1173.6L228.0 1163.5L212.4 1146.7L203.4 1124.9L202.6 1100.9L210.3 1077.6L226.1 1057.9"/>
<circle cx="360" cy="1355" r="70" fill="#fff"/><path d="M363.8 1362.5L361.1 1364.6L357.4 1365.5L353.3 1365.0L349.2 1362.8L346.0 1358.9L344.3 1353.7L344.7 1347.8L347.3 1342.0L352.1 1337.3L358.6 1334.4L366.2 1334.1L373.8 1336.5L380.4 1341.8L384.9 1349.4L386.5 1358.6L384.7 1368.1L379.4 1376.7L371.1 1383.3L360.6 1386.6L349.2 1386.0L338.4 1381.3L329.5 1372.7L324.1 1361.3L322.9 1348.2L326.5 1335.1L334.8 1323.8L346.8 1315.8L361.2 1312.4L376.4 1314.4L390.3 1321.7L401.0 1333.7L407.1 1349.1L407.4 1366.1L401.6 1382.5L390.2 1396.2L374.3 1405.3L355.9 1408.4L337.1 1404.8L320.4 1394.6"/>
<circle cx="280" cy="1250" r="95" fill="#fff"/><path d="M288.7 1257.3L286.4 1261.4L282.4 1264.5L276.9 1266.1L270.6 1265.4L264.6 1262.2L259.7 1256.6L257.0 1249.1L257.2 1240.5L260.7 1232.1L267.4 1225.0L276.6 1220.6L287.5 1219.6L298.5 1222.7L308.1 1229.9L315.0 1240.4L317.8 1253.3L315.8 1266.9L308.8 1279.5L297.5 1289.2L282.9 1294.4L266.8 1294.3L251.3 1288.3L238.4 1276.8L230.1 1261.1L227.7 1242.8L232.0 1224.3L242.7 1208.0L259.0 1196.2L279.0 1190.6L300.2 1192.4L320.0 1201.7L335.8 1217.8L345.1 1238.8L346.6 1262.4L339.5 1285.6L324.5 1305.3L303.1 1318.9L277.7 1324.3L251.4 1320.4"/>
<circle cx="280" cy="1430" r="90" fill="#fff"/><path d="M275.5 1439.8L271.3 1438.8L267.3 1435.8L264.5 1431.2L263.6 1425.3L264.9 1419.0L268.8 1413.2L275.0 1408.8L282.9 1406.8L291.5 1407.9L299.6 1412.2L306.0 1419.5L309.6 1429.1L309.6 1439.9L305.5 1450.6L297.6 1459.5L286.5 1465.3L273.6 1466.9L260.4 1463.8L248.7 1455.9L240.2 1443.9L236.3 1429.2L237.8 1413.5L245.0 1398.8L257.2 1387.2L273.3 1380.4L291.2 1379.6L308.9 1385.4L323.8 1397.2L334.0 1414.0L337.7 1433.9L334.3 1454.3L323.6 1472.7L306.7 1486.6L285.5 1493.9L262.6 1493.4L240.8 1484.7L222.9 1468.5L211.6 1446.7L208.5 1421.7"/>
<path d="M1613 62 L1703 90 L1648 175 Z" fill="#fff"/>
<path d="M1823 100 C1833 75 1843 55 1858 42 C1893 80 1913 120 1918 160 Z" fill="#fff"/><path d="M1858 60 L1863 150"/>
<path d="M2068 195 L2118 172 L2108 250 Z" fill="#fff"/>
<path d="M2113 260 C2173 230 2253 230 2318 255 C2293 300 2273 320 2243 345 Z" fill="#fff"/><path d="M2143 300 C2183 285 2223 280 2253 280"/>
<path d="M2203 340 L2243 285 L2263 350 Z" fill="#fff"/>
<path d="M2443 470 L2548 520 L2463 600 Z" fill="#fff"/><path d="M2433 520 L2523 520"/>
<path d="M1703 375 L1678 445 L1793 460 Z" fill="#fff"/><path d="M1713 440 L1783 400"/>
<path d="M2073 505 L2028 565 L2103 585 Z" fill="#fff"/>
<path d="M2203 660 C2193 710 2191 760 2193 810 L2268 770 Z" fill="#fff"/><path d="M2218 790 L2258 700"/>
<path d="M2353 830 L2423 895 L2438 800 Z" fill="#fff"/>
<circle cx="1893" cy="455" r="75" fill="#fff"/><path d="M1901.6 457.7L1901.2 461.3L1899.2 464.8L1895.7 467.6L1890.9 469.1L1885.5 468.6L1880.3 466.0L1876.0 461.4L1873.5 455.1L1873.5 447.9L1876.2 440.7L1881.5 434.6L1889.1 430.6L1898.0 429.5L1907.3 431.7L1915.5 437.3L1921.5 445.8L1924.2 456.3L1923.0 467.6L1917.7 478.1L1908.8 486.4L1897.0 491.2L1883.9 491.7L1871.0 487.3L1860.1 478.4L1852.8 465.9L1850.2 451.1L1853.0 435.9L1861.2 422.3L1874.0 412.1L1890.0 406.9L1907.3 407.6L1923.6 414.4L1936.9 426.9L1945.2 443.6L1947.2 462.6L1942.4 481.6L1931.0 498.0L1914.1 509.8L1893.8 515.0"/>
<circle cx="2058" cy="355" r="85" fill="#fff"/><path d="M2061.7 364.5L2058.2 366.7L2053.6 367.4L2048.6 366.3L2044.0 363.1L2040.6 358.0L2039.2 351.5L2040.3 344.4L2044.2 337.8L2050.5 332.7L2058.8 330.0L2068.0 330.5L2076.9 334.4L2084.2 341.5L2088.7 351.3L2089.6 362.5L2086.2 373.8L2078.8 383.6L2068.0 390.5L2054.9 393.2L2041.2 391.1L2028.7 384.1L2019.0 372.7L2013.8 358.2L2014.0 342.3L2020.0 326.9L2031.3 314.2L2046.8 306.1L2064.6 303.7L2082.7 307.9L2098.6 318.4L2110.2 334.2L2115.6 353.6L2113.9 374.2L2104.9 393.3L2089.5 408.5L2069.2 417.6L2046.6 419.0L2024.3 412.3L2005.3 398.0"/>
<circle cx="2003" cy="235" r="80" fill="#fff"/><path d="M1995.9 241.5L1992.8 239.2L1990.6 235.4L1989.9 230.6L1991.2 225.5L1994.5 220.8L1999.7 217.3L2006.3 215.9L2013.4 217.0L2020.0 220.8L2025.2 227.2L2027.9 235.4L2027.6 244.5L2023.8 253.4L2016.8 260.7L2007.2 265.2L1996.1 266.2L1985.0 263.0L1975.3 255.9L1968.4 245.3L1965.6 232.6L1967.5 219.2L1974.2 206.9L1985.1 197.4L1999.2 192.1L2014.7 192.1L2029.6 197.7L2042.1 208.4L2050.2 223.3L2052.7 240.6L2048.9 258.1L2039.0 273.7L2023.9 285.1L2005.3 290.6L1985.4 289.2L1966.8 280.9L1952.0 266.2L1942.9 246.8L1941.2 225.0L1947.3 203.5"/>
<circle cx="1758" cy="150" r="75" fill="#fff"/><path d="M1764.3 156.5L1762.2 159.4L1758.7 161.6L1754.3 162.4L1749.4 161.4L1744.9 158.4L1741.5 153.6L1740.0 147.5L1740.9 140.8L1744.3 134.4L1750.1 129.4L1757.7 126.6L1766.3 126.7L1774.7 130.0L1781.7 136.4L1786.2 145.3L1787.4 155.6L1784.8 166.1L1778.3 175.4L1768.6 182.1L1756.8 185.1L1744.2 183.7L1732.4 177.8L1723.2 167.8L1717.9 154.8L1717.5 140.2L1722.3 126.1L1732.0 114.1L1745.8 106.1L1761.9 103.2L1778.4 106.3L1793.3 115.2L1804.3 129.1L1810.0 146.4L1809.3 165.0L1802.0 182.7L1788.6 197.0L1770.7 206.0L1750.3 208.2L1730.0 203.1"/>
<circle cx="1733" cy="290" r="90" fill="#fff"/><path d="M1722.5 292.6L1720.7 288.6L1720.6 283.7L1722.4 278.6L1726.4 274.2L1732.3 271.4L1739.2 270.8L1746.5 272.9L1752.9 277.8L1757.5 285.2L1759.1 294.3L1757.4 303.8L1752.1 312.6L1743.6 319.3L1732.7 322.8L1720.8 322.1L1709.4 317.1L1700.1 307.9L1694.4 295.6L1693.3 281.6L1697.3 267.5L1706.4 255.2L1719.7 246.7L1735.6 243.2L1752.4 245.6L1767.7 253.9L1779.4 267.5L1785.9 284.9L1785.9 304.0L1779.1 322.4L1765.9 337.6L1747.7 347.6L1726.6 350.7L1705.3 346.1L1686.4 334.1L1672.5 315.8L1665.8 293.2L1667.3 269.2L1677.4 246.8L1695.0 228.8"/>
<circle cx="1878" cy="295" r="85" fill="#fff"/><path d="M1876.7 305.1L1872.6 305.3L1868.2 303.8L1864.4 300.4L1861.9 295.4L1861.3 289.3L1863.2 282.9L1867.6 277.3L1874.1 273.3L1882.2 271.8L1890.7 273.4L1898.5 278.2L1904.5 285.9L1907.5 295.7L1906.8 306.4L1902.1 316.7L1893.8 325.0L1882.5 330.1L1869.7 330.9L1857.0 327.1L1846.0 318.7L1838.3 306.5L1835.3 291.9L1837.7 276.6L1845.5 262.8L1858.1 252.1L1874.1 246.4L1891.6 246.7L1908.4 253.2L1922.3 265.5L1931.2 282.4L1933.7 301.8L1929.2 321.4L1917.9 338.6L1900.8 351.1L1880.0 357.0L1857.9 355.3L1837.3 345.7L1820.9 329.2L1811.2 307.5"/>
<circle cx="2348" cy="430" r="90" fill="#fff"/><path d="M2357.9 434.2L2357.0 438.5L2354.2 442.5L2349.7 445.4L2343.8 446.6L2337.5 445.4L2331.5 441.7L2327.0 435.6L2324.7 427.8L2325.5 419.2L2329.6 410.9L2336.7 404.3L2346.2 400.4L2357.1 400.2L2367.8 403.9L2377.0 411.6L2383.1 422.4L2385.1 435.3L2382.3 448.6L2374.8 460.5L2363.1 469.4L2348.5 473.8L2332.7 472.7L2317.9 465.9L2305.9 454.0L2298.6 438.2L2297.3 420.2L2302.5 402.4L2313.9 387.1L2330.5 376.5L2350.2 372.2L2370.7 375.1L2389.4 385.2L2403.8 401.7L2411.7 422.6L2411.9 445.6L2403.8 467.6L2388.2 485.9L2366.7 497.9L2341.8 501.7"/>
<circle cx="2173" cy="435" r="75" fill="#fff"/><path d="M2167.7 442.3L2164.4 440.7L2161.7 437.7L2160.2 433.4L2160.4 428.5L2162.5 423.5L2166.7 419.4L2172.4 416.9L2179.2 416.5L2186.0 418.8L2191.9 423.7L2196.0 430.7L2197.3 439.2L2195.5 448.0L2190.4 456.0L2182.5 462.0L2172.5 464.9L2161.7 464.1L2151.4 459.3L2143.1 450.9L2138.2 439.8L2137.4 427.1L2141.3 414.5L2149.6 403.7L2161.5 396.3L2175.7 393.4L2190.5 395.7L2204.0 403.3L2214.2 415.5L2219.7 430.9L2219.5 447.7L2213.3 463.8L2201.5 477.1L2185.4 485.6L2166.9 488.1L2148.3 483.9L2131.9 473.2L2120.0 457.0L2114.4 437.3L2116.0 416.4"/>
<circle cx="2163" cy="570" r="70" fill="#fff"/><path d="M2167.5 577.1L2165.1 579.4L2161.5 580.7L2157.3 580.6L2153.0 578.8L2149.5 575.2L2147.3 570.2L2147.0 564.4L2149.0 558.4L2153.3 553.2L2159.6 549.7L2167.0 548.6L2174.9 550.2L2181.9 554.8L2187.2 562.0L2189.7 570.9L2188.9 580.6L2184.5 589.7L2176.9 597.0L2166.8 601.4L2155.4 601.9L2144.1 598.3L2134.5 590.7L2127.9 579.8L2125.4 566.9L2127.7 553.6L2134.8 541.5L2145.9 532.3L2160.0 527.5L2175.2 527.9L2189.8 533.8L2201.7 544.7L2209.3 559.4L2211.3 576.3L2207.2 593.2L2197.2 608.0L2182.3 618.7L2164.2 623.5L2145.2 621.8L2127.5 613.3"/>
<circle cx="2423" cy="645" r="85" fill="#fff"/><path d="M2414.3 650.3L2411.5 647.2L2410.0 642.8L2410.3 637.7L2412.7 632.6L2417.1 628.4L2423.3 625.9L2430.4 625.8L2437.6 628.5L2443.7 633.9L2447.8 641.5L2448.9 650.7L2446.6 660.1L2440.7 668.5L2431.9 674.6L2421.0 677.4L2409.3 676.0L2398.3 670.4L2389.7 660.9L2384.8 648.5L2384.5 634.6L2389.3 621.0L2398.9 609.6L2412.3 602.0L2428.1 599.5L2444.2 602.8L2458.6 611.7L2469.3 625.6L2474.7 642.8L2473.6 661.3L2466.0 678.8L2452.3 692.9L2434.2 701.5L2413.6 703.4L2393.2 697.8L2375.6 685.1L2363.3 666.7L2358.0 644.6L2360.8 621.5L2371.7 600.4"/>
<circle cx="2303" cy="580" r="85" fill="#fff"/><path d="M2313.1 581.0L2313.5 585.1L2312.1 589.5L2308.8 593.4L2303.9 596.1L2297.8 596.8L2291.4 595.1L2285.6 590.9L2281.4 584.5L2279.7 576.5L2281.1 567.9L2285.7 560.0L2293.2 553.8L2302.9 550.5L2313.6 550.9L2324.0 555.3L2332.6 563.4L2338.0 574.4L2339.2 587.2L2335.7 600.1L2327.6 611.3L2315.6 619.3L2301.1 622.8L2285.8 620.8L2271.7 613.4L2260.7 601.1L2254.6 585.3L2254.3 567.8L2260.3 550.8L2272.2 536.6L2288.8 527.2L2308.2 524.1L2327.9 528.0L2345.4 538.9L2358.4 555.5L2365.0 576.2L2363.8 598.4L2354.9 619.2L2338.8 636.1L2317.5 646.4"/>
<circle cx="2338" cy="755" r="75" fill="#fff"/><path d="M2335.1 763.5L2331.5 763.0L2328.0 760.9L2325.3 757.3L2324.0 752.5L2324.6 747.1L2327.3 742.0L2332.1 737.8L2338.4 735.5L2345.7 735.7L2352.8 738.6L2358.7 744.1L2362.5 751.8L2363.3 760.8L2360.9 769.9L2355.0 778.0L2346.4 783.7L2335.8 786.2L2324.6 784.6L2314.2 779.1L2306.1 769.8L2301.7 758.0L2301.6 744.8L2306.4 732.1L2315.6 721.4L2328.3 714.5L2343.1 712.3L2358.2 715.6L2371.6 724.2L2381.4 737.3L2386.2 753.4L2385.0 770.6L2377.7 786.8L2364.8 799.7L2347.9 807.5L2328.8 809.0L2310.0 803.6L2293.9 791.7L2282.7 774.5L2278.0 754.1"/>
</g></g>
<g id="artBm">
<g transform="translate(850 500) scale(0.188466)" stroke="#000" stroke-width="26" fill="none" stroke-linecap="round" stroke-linejoin="round">
<path d="M362 1062 C340 960 375 850 410 745 C440 650 520 600 580 605 C650 612 695 690 705 770 C720 900 722 1020 715 1130 L720 1290"/>
<path d="M430 765 C450 690 520 645 610 638"/>
<path d="M468 745 C500 695 560 662 645 655"/>
<path d="M452 790 C440 870 475 965 548 1000 C600 985 655 900 668 800"/>
<path d="M455 775 C500 800 540 808 565 800 L575 745 L592 800 C620 803 650 800 672 795"/>
<path d="M488 985 L478 1035 L412 1195 C480 1232 570 1236 632 1215 L622 1050 L612 985"/>
<path d="M478 1035 C430 1060 380 1070 350 1090 C300 1125 275 1180 255 1260 L162 1610 C250 1610 380 1590 455 1565"/>
<path d="M355 1095 C350 1180 335 1250 310 1330 L288 1530 C340 1535 400 1525 450 1512"/>
<path d="M715 1110 C760 1130 790 1170 805 1230 C820 1300 828 1370 830 1430"/>
<path d="M590 1610 L567 1758 L622 1758 L640 1610"/>
<path d="M330 1640 L318 1698 C250 1950 150 2400 82 3078 C85 3130 120 3150 190 3173 C280 3160 350 3120 430 3123 C550 3130 650 3160 720 3158 L840 3138"/>
<path d="M740 1600 L760 1698 C800 1900 870 2300 895 2500 C905 2700 890 2900 840 3138"/>
<path d="M945 540 C925 420 945 290 985 230 C1020 185 1100 180 1160 205 C1230 235 1285 285 1282 345 C1280 400 1265 450 1258 480"/>
<path d="M1030 560 C1010 520 995 470 985 430 L1010 390 C1080 355 1140 315 1175 270 C1200 300 1240 330 1278 340"/>
<path d="M1002 440 C1010 520 1060 600 1150 625 C1200 600 1245 500 1262 400"/>
<path d="M945 610 C950 650 930 690 905 715 C950 730 1000 712 1035 682"/>
<path d="M1040 600 L1048 690 L1170 965 L1195 655 L1190 625"/>
<path d="M1195 655 C1280 668 1350 680 1395 700 C1425 715 1440 740 1445 780"/>
<path d="M1300 690 C1340 770 1390 860 1408 950 C1420 1020 1400 1110 1368 1200"/>
<path d="M1035 682 C960 720 900 745 872 780 C840 830 842 900 832 1000 C822 1100 812 1200 830 1250 L1005 1385"/>
<path d="M975 762 C958 850 958 950 970 1050 C978 1100 955 1170 940 1200 L1022 1252"/>
<path d="M975 1050 C1010 1100 1040 1160 1062 1225"/>
<path d="M958 1400 C920 1550 910 1650 910 1698 L912 2600"/>
<path d="M1420 1480 L1380 1698 C1340 2000 1290 2300 1235 2500 C1180 2700 1185 2800 1200 2900 C1220 3050 1260 3150 1240 3290"/>
<path d="M840 3138 C845 3180 900 3195 1000 3198 C1080 3198 1150 3185 1240 3222"/>
<circle cx="975" cy="570" r="40"/><path d="M975 570 m-15 0 a15 15 0 1 1 15 15" stroke-width="14"/>
<path d="M820 1445Q857 1464 873 1491 Q839 1523 796 1523Q817 1555 792 1584 Q767 1599 730 1580Q730 1617 699 1635 Q662 1633 640 1601Q618 1633 575 1642 Q550 1617 550 1580Q513 1599 495 1582 Q463 1555 484 1523Q441 1523 419 1489 Q423 1464 460 1445Q423 1426 435 1392 Q441 1367 484 1367Q463 1335 473 1302 Q513 1291 550 1310Q550 1273 571 1244 Q618 1257 640 1289Q662 1257 704 1267 Q730 1273 730 1310Q767 1291 794 1298 Q817 1335 796 1367Q839 1367 860 1403 Q857 1426 820 1445Z" fill="#000" stroke-width="14"/><path d="M814 1485L840 1491M767 1555L786 1572M687 1596L694 1618M593 1596L586 1618M513 1555L494 1572M466 1485L440 1491M466 1405L440 1399M513 1335L494 1318M593 1294L586 1272M687 1294L694 1272M767 1335L786 1318M814 1405L840 1399" stroke="#fff" stroke-width="12"/><path d="M645 1469A24 24 0 1 1 658 1429L648 1447M659 1513A24 24 0 1 1 701 1515L680 1510M628 1508A24 24 0 1 1 596 1480L609 1497M568 1471A24 24 0 1 1 582 1431L572 1449M577 1398A24 24 0 1 1 619 1404L599 1397M652 1387A24 24 0 1 1 689 1408L673 1394M719 1467A24 24 0 1 1 736 1429L724 1446M603 1585A24 24 0 1 1 620 1546L608 1564M515 1514A24 24 0 1 1 529 1474L519 1493M495 1392A24 24 0 1 1 535 1403L517 1394M612 1349A24 24 0 1 1 641 1319L624 1331M758 1359A24 24 0 1 1 725 1333L739 1349M792 1432A24 24 0 1 1 755 1452L775 1445M697 1536A24 24 0 1 1 724 1568L713 1550" stroke="#fff" stroke-width="11"/>
<path d="M1435 1365Q1478 1387 1495 1433 Q1461 1447 1411 1449Q1437 1485 1421 1501 Q1390 1531 1344 1513Q1348 1556 1314 1588 Q1281 1578 1250 1544Q1230 1583 1189 1586 Q1159 1576 1151 1533Q1112 1560 1070 1554 Q1053 1525 1068 1484Q1019 1493 999 1465 Q986 1438 1021 1408Q973 1396 963 1367 Q973 1334 1021 1322Q986 1292 978 1247 Q1019 1237 1068 1246Q1053 1205 1083 1170 Q1112 1170 1151 1197Q1159 1154 1192 1145 Q1230 1147 1250 1186Q1281 1152 1303 1161 Q1348 1174 1344 1217Q1390 1199 1419 1216 Q1437 1245 1411 1281Q1461 1283 1495 1305 Q1478 1343 1435 1365Z" fill="#000" stroke-width="14"/><path d="M1429 1408L1459 1415M1382 1484L1405 1502M1299 1533L1310 1559M1200 1544L1196 1570M1106 1513L1088 1535M1039 1449L1012 1461M1015 1365L984 1365M1039 1281L1012 1269M1106 1217L1088 1195M1200 1186L1196 1160M1299 1197L1310 1171M1382 1246L1405 1228M1429 1322L1459 1315" stroke="#fff" stroke-width="12"/><path d="M1197 1361A28 28 0 1 1 1235 1391L1219 1373M1245 1420A28 28 0 1 1 1275 1458L1264 1437M1185 1460A28 28 0 1 1 1206 1416L1192 1436M1164 1371A28 28 0 1 1 1126 1341L1142 1359M1166 1325A28 28 0 1 1 1206 1299L1184 1308M1286 1319A28 28 0 1 1 1277 1271L1277 1296M1286 1361A28 28 0 1 1 1326 1388L1309 1371M1207 1498A28 28 0 1 1 1165 1474L1183 1490M1077 1417A28 28 0 1 1 1074 1465L1080 1442M1075 1375A28 28 0 1 1 1080 1326L1073 1350M1135 1246A28 28 0 1 1 1087 1253L1112 1254M1223 1199A28 28 0 1 1 1188 1232L1208 1219M1319 1225A28 28 0 1 1 1299 1269L1313 1249M1406 1317A28 28 0 1 1 1358 1320L1382 1323M1372 1399A28 28 0 1 1 1345 1439L1362 1422M1296 1466A28 28 0 1 1 1262 1500L1282 1486" stroke="#fff" stroke-width="11"/>
</g>
<g transform="translate(1030 500) scale(0.188466)" stroke="#000" stroke-width="26" fill="none" stroke-linecap="round" stroke-linejoin="round">
<path d="M760 135 C790 100 840 100 870 140"/>
<path d="M648 205 C640 330 575 440 545 520 C510 630 495 760 490 900 C485 1000 478 1100 470 1160"/>
<path d="M685 215 C690 320 665 450 648 600"/>
<path d="M815 235 C760 235 715 270 712 330 C705 430 750 520 815 545 C880 520 925 420 918 330 C915 270 870 235 815 235 Z"/>
<path d="M940 215 C935 330 960 470 990 600"/>
<path d="M965 190 C975 330 1030 450 1060 560 C1080 620 1090 660 1095 700"/>
<path d="M755 560 C700 600 620 620 570 670 C520 720 510 800 500 900"/>
<path d="M880 560 C950 600 1020 640 1060 700 C1100 760 1130 900 1150 1000 C1165 1080 1160 1150 1140 1200"/>
<path d="M645 775 C750 830 900 830 990 770 C1000 900 1010 1000 1040 1090"/>
<path d="M645 775 L625 850 C600 950 570 1050 555 1110"/>
<path d="M640 800 C630 900 620 1000 640 1080"/>
<path d="M470 1500 L420 1698 C390 1900 350 2200 350 2500 C350 2800 390 3100 430 3290"/>
<path d="M1140 1450 L1215 1698 C1300 1900 1450 2250 1500 2400 C1580 2600 1660 2850 1670 3040 C1600 3080 1480 3140 1400 3200 C1330 3250 1280 3270 1170 3250 L1060 3290"/>
<path d="M1215 1698 C1320 1950 1480 2350 1560 2500 C1660 2700 1730 2900 1740 3000 C1740 3050 1700 3090 1640 3110 C1560 3140 1450 3190 1380 3240 L1290 3280"/>
<circle cx="668" cy="180" r="24" fill="#000" stroke-width="10"/><circle cx="668" cy="180" r="7" fill="#fff" stroke="none"/>
<circle cx="722" cy="180" r="24" fill="#000" stroke-width="10"/><circle cx="722" cy="180" r="7" fill="#fff" stroke="none"/>
<circle cx="776" cy="180" r="24" fill="#000" stroke-width="10"/><circle cx="776" cy="180" r="7" fill="#fff" stroke="none"/>
<circle cx="830" cy="180" r="24" fill="#000" stroke-width="10"/><circle cx="830" cy="180" r="7" fill="#fff" stroke="none"/>
<circle cx="884" cy="180" r="24" fill="#000" stroke-width="10"/><circle cx="884" cy="180" r="7" fill="#fff" stroke="none"/>
<circle cx="932" cy="180" r="24" fill="#000" stroke-width="10"/><circle cx="932" cy="180" r="7" fill="#fff" stroke="none"/>
<path d="M1099 1300Q1158 1325 1173 1340 Q1149 1363 1082 1372Q1125 1410 1134 1432 Q1100 1443 1033 1435Q1055 1482 1030 1494 Q1016 1506 957 1482Q957 1532 961 1556 Q908 1545 864 1506Q841 1553 823 1557 Q789 1553 766 1506Q722 1545 676 1544 Q673 1532 673 1482Q614 1506 575 1497 Q575 1482 597 1435Q530 1443 515 1424 Q505 1410 548 1372Q481 1363 443 1345 Q472 1325 531 1300Q472 1275 449 1252 Q481 1237 548 1228Q505 1190 523 1171 Q530 1157 597 1165Q575 1118 588 1090 Q614 1094 673 1118Q673 1068 693 1067 Q722 1055 766 1094Q789 1047 828 1035 Q841 1047 864 1094Q908 1055 952 1040 Q957 1068 957 1118Q1016 1094 1065 1089 Q1055 1118 1033 1165Q1100 1157 1137 1159 Q1125 1190 1082 1228Q1149 1237 1189 1250 Q1158 1275 1099 1300Z" fill="#000" stroke-width="14"/><path d="M1095 1336L1137 1342M1061 1405L1098 1421M998 1461L1025 1485M912 1497L927 1527M815 1510L815 1541M718 1497L703 1527M632 1461L605 1485M569 1405L532 1421M535 1336L493 1342M535 1264L493 1258M569 1195L532 1179M632 1139L605 1115M718 1103L703 1073M815 1090L815 1059M912 1103L927 1073M998 1139L1025 1115M1061 1195L1098 1179M1095 1264L1137 1258" stroke="#fff" stroke-width="12"/><path d="M839 1277A33 33 0 1 1 784 1290L812 1289M905 1395A33 33 0 1 1 881 1343L888 1371M779 1403A33 33 0 1 1 768 1347L769 1376M701 1334A33 33 0 1 1 719 1281L705 1306M784 1217A33 33 0 1 1 730 1200L755 1213M842 1235A33 33 0 1 1 898 1242L872 1233M913 1274A33 33 0 1 1 927 1329L925 1301M742 1487A33 33 0 1 1 784 1449L760 1464M639 1422A33 33 0 1 1 687 1453L666 1433M592 1391A33 33 0 1 1 647 1381L619 1381M576 1330A33 33 0 1 1 627 1308L600 1314M584 1221A33 33 0 1 1 611 1270L602 1244M635 1166A33 33 0 1 1 663 1215L654 1188M769 1128A33 33 0 1 1 712 1132L740 1135M819 1108A33 33 0 1 1 813 1165L821 1137M950 1143A33 33 0 1 1 893 1139L921 1146M1010 1176A33 33 0 1 1 957 1196L985 1191M1062 1260A33 33 0 1 1 1011 1235L1034 1252M1016 1301A33 33 0 1 1 1014 1358L1020 1330M1013 1420A33 33 0 1 1 1012 1364L1008 1391M951 1413A33 33 0 1 1 898 1433L925 1428M875 1454A33 33 0 1 1 821 1437L846 1450" stroke="#fff" stroke-width="11"/>
</g>
<g transform="translate(1180 500) scale(0.188466)" stroke="#000" stroke-width="26" fill="none" stroke-linecap="round" stroke-linejoin="round">
<path d="M560 340 C520 250 540 150 620 105 C700 80 800 130 840 200 C870 250 860 300 855 330 C900 350 905 430 870 470 C840 490 815 480 805 460"/>
<path d="M585 310 C560 380 620 500 690 525 C760 500 810 400 795 290 C780 240 740 225 700 245 C660 220 600 240 585 310 Z"/>
<path d="M660 520 L640 590 L612 785 C640 790 670 800 700 800 L770 770 L765 560 L760 500"/>
<path d="M650 580 C580 610 500 640 470 670 C430 710 420 800 420 900 C418 1000 420 1050 430 1100"/>
<path d="M540 620 L535 850"/>
<path d="M765 560 C810 580 850 590 880 610 C940 700 990 850 1020 1000 C1040 1080 1060 1140 1070 1185 L830 1170"/>
<path d="M880 610 L870 640 C880 760 900 830 935 880 L895 1090 L960 1085"/>
<path d="M615 1180 L600 1335 L665 1340 L650 1180"/>
<path d="M790 1090 L830 1085 L835 1200 L800 1205 Z"/>
<path d="M500 1175 C470 1400 440 1600 420 1760"/>
<path d="M930 1200 C960 1400 1000 1600 1030 1698 C1100 2000 1150 2400 1170 2700 C1170 2780 1150 2820 1080 2850 C1040 2880 1000 2920 940 2948"/>
<path d="M1210 660 C1195 560 1200 450 1210 390 C1230 320 1330 280 1420 270 C1500 270 1580 340 1590 450 C1595 550 1580 650 1565 690 C1540 700 1500 690 1490 660"/>
<path d="M1235 420 C1300 400 1370 370 1415 330 L1425 370 C1450 420 1490 460 1540 465 L1475 482"/>
<path d="M1240 430 C1240 520 1290 620 1370 650 C1440 630 1510 540 1535 470"/>
<path d="M1240 430 L1225 660"/>
<path d="M1310 660 L1320 800 L1390 820 L1458 718 L1450 640"/>
<path d="M1305 680 C1200 690 1100 700 1050 750 C1020 780 1000 820 990 850"/>
<path d="M1190 700 C1150 780 1090 850 1075 950 C1070 1000 1080 1100 1100 1180"/>
<path d="M1460 715 C1540 740 1620 760 1660 800 C1700 850 1710 1000 1715 1100 C1720 1180 1700 1220 1650 1260 L1490 1340"/>
<path d="M1545 760 C1560 850 1565 950 1540 1050 L1580 1180 L1470 1230"/>
<path d="M1540 1050 C1500 1100 1470 1170 1450 1200"/>
<path d="M1075 1290 C1020 1350 990 1420 975 1480"/>
<path d="M1560 1340 C1600 1500 1620 1650 1620 1698 C1610 2000 1610 2300 1630 2550 C1650 2750 1685 2850 1690 2900 C1690 2930 1660 2945 1600 2948 C1500 2950 1420 2930 1370 2938 C1300 2950 1250 2985 1200 2980 C1120 2975 1050 2945 1000 2943 L940 2948"/>
<path d="M780 995Q817 1013 811 1038 Q799 1071 756 1071Q777 1103 756 1124 Q727 1145 690 1127Q690 1163 668 1177 Q622 1178 600 1147Q578 1178 529 1186 Q510 1163 510 1127Q473 1145 440 1123 Q423 1103 444 1071Q401 1071 386 1043 Q383 1013 420 995Q383 977 389 953 Q401 919 444 919Q423 887 425 855 Q473 845 510 863Q510 827 546 800 Q578 812 600 843Q622 812 663 818 Q690 827 690 863Q727 845 761 854 Q777 887 756 919Q799 919 832 947 Q817 977 780 995Z" fill="#000" stroke-width="14"/><path d="M774 1034L800 1040M727 1102L746 1119M647 1142L654 1164M553 1142L546 1164M473 1102L454 1119M426 1034L400 1040M426 956L400 950M473 888L454 871M553 848L546 826M647 848L654 826M727 888L746 871M774 956L800 950" stroke="#fff" stroke-width="12"/><path d="M617 979A24 24 0 1 1 577 988L598 987M660 1062A24 24 0 1 1 641 1026L647 1046M545 1037A24 24 0 1 1 560 1075L556 1055M512 976A24 24 0 1 1 511 1017L515 997M536 939A24 24 0 1 1 571 961L556 947M647 960A24 24 0 1 1 650 919L645 938M653 997A24 24 0 1 1 691 1012L674 1001M580 1121A24 24 0 1 1 561 1084L567 1104M492 1030A24 24 0 1 1 452 1025L471 1031M494 919A24 24 0 1 1 455 932L476 929M555 872A24 24 0 1 1 583 902L572 885M687 930A24 24 0 1 1 717 903L700 914M759 990A24 24 0 1 1 718 992L738 994M658 1081A24 24 0 1 1 681 1115L673 1097" stroke="#fff" stroke-width="11"/>
<path d="M1473 1335Q1512 1354 1523 1386 Q1496 1406 1451 1407Q1475 1439 1469 1478 Q1433 1479 1392 1463Q1395 1501 1368 1532 Q1335 1520 1308 1490Q1290 1524 1268 1532 Q1226 1518 1218 1481Q1183 1504 1138 1496 Q1130 1474 1144 1438Q1100 1446 1080 1416 Q1070 1398 1102 1372Q1059 1362 1054 1336 Q1059 1308 1102 1298Q1070 1272 1072 1241 Q1100 1224 1144 1232Q1130 1196 1145 1183 Q1183 1166 1218 1189Q1226 1152 1249 1129 Q1290 1146 1308 1180Q1335 1150 1372 1160 Q1395 1169 1392 1207Q1433 1191 1460 1214 Q1475 1231 1451 1263Q1496 1264 1506 1292 Q1512 1316 1473 1335Z" fill="#000" stroke-width="14"/><path d="M1468 1372L1495 1378M1426 1438L1447 1454M1352 1481L1362 1503M1262 1490L1259 1513M1178 1463L1162 1483M1119 1407L1094 1418M1097 1335L1069 1335M1119 1263L1094 1252M1178 1207L1162 1187M1262 1180L1259 1157M1352 1189L1362 1167M1426 1232L1447 1216M1468 1298L1495 1292" stroke="#fff" stroke-width="12"/><path d="M1309 1335A24 24 0 1 1 1273 1314L1289 1328M1344 1374A24 24 0 1 1 1303 1386L1324 1383M1253 1417A24 24 0 1 1 1264 1376L1255 1395M1210 1361A24 24 0 1 1 1223 1321L1213 1339M1267 1276A24 24 0 1 1 1229 1259L1246 1271M1340 1259A24 24 0 1 1 1299 1271L1320 1269M1359 1357A24 24 0 1 1 1388 1327L1371 1339M1267 1445A24 24 0 1 1 1227 1433L1245 1443M1133 1387A24 24 0 1 1 1163 1416L1151 1399M1135 1279A24 24 0 1 1 1132 1321L1137 1300M1222 1252A24 24 0 1 1 1233 1211L1224 1230M1349 1210A24 24 0 1 1 1308 1204L1328 1211M1404 1255A24 24 0 1 1 1398 1296L1405 1276M1448 1364A24 24 0 1 1 1408 1351L1427 1361M1373 1426A24 24 0 1 1 1332 1432L1353 1433" stroke="#fff" stroke-width="11"/>
</g>
</g>
</svg>
<!-- ===== canvas overlays: size label, selection box, zoom ===== -->
<div class="abs" style="left:977px;top:1133px;width:329px;height:48px;border-radius:7px;background:#26282d"></div>
<div class="t" id="o_dim" style="left:1011.4px;top:1138px;font-size:32px;color:#fff;white-space:pre;letter-spacing:0.95px">2.87  in x 2.92  in</div>
<div class="abs" style="left:849px;top:1225px;width:584px;height:594px;border:3px solid #8a8a8a"></div>
<div class="abs" style="left:1072px;top:1521px;width:140px;height:2px;background:#b0b0b0"></div>
<div class="abs" style="left:1141px;top:1453px;width:2px;height:139px;background:#b0b0b0"></div>
<div class="abs hnd" style="left:834px;top:1209px"></div>
<div class="abs hnd" style="left:1416px;top:1209px"></div>
<div class="abs hnd" style="left:834px;top:1802px"></div>
<div class="abs hnd" style="left:1416px;top:1802px"></div>
<div class="abs" style="left:288px;top:1828px;width:334px;height:93px;border-radius:47px;background:rgba(195,195,200,.36)"></div>
<div class="abs" style="left:308px;top:1851px;width:51px;height:51px;border-radius:50%;border:3.5px solid #b9babd"></div>
<div class="abs" style="left:318px;top:1874.500px;width:31px;height:4px;background:#b9babd"></div>
<div class="abs" style="left:549px;top:1851px;width:51px;height:51px;border-radius:50%;border:3.5px solid #b9babd"></div>
<div class="abs" style="left:560px;top:1874.500px;width:29px;height:4px;background:#b9babd"></div>
<div class="abs" style="left:572.500px;top:1862px;width:4px;height:29px;background:#b9babd"></div>
<div class="t" id="o_zoom" style="left:380px;top:1849px;font-size:53px;color:#b9babd;-webkit-text-stroke:1px #b9babd;letter-spacing:4.33px">100%</div>
<!-- ===== right panel ===== -->
<div id="panel" class="abs"></div>
<div class="t" id="p_layers" style="left:2204px;top:263px;font-size:38px;font-weight:bold;color:#17855f;letter-spacing:-0.20px">Layers</div>
<div class="t" id="p_cs" style="left:2417px;top:263px;font-size:39px;color:#333;letter-spacing:1.22px">Color Sync</div>
<div class="abs" style="left:2159px;top:349px;width:841px;height:3px;background:#e3e3e3"></div>
<div class="abs" style="left:2159px;top:341px;width:213px;height:9px;background:#17855f"></div>
<div class="abs" style="left:2159px;top:489px;width:841px;height:3px;background:#e3e3e3"></div>
<div class="abs" style="left:2170px;top:498px;width:822px;height:157px;border-radius:12px;background:#e8f8f3"></div>
<div class="lay" id="l1" style="left:2352px;top:553px;letter-spacing:1.50px">Arch Www.uprooted.design</div>
<div class="lay" id="l2" style="left:2349px;top:716px;letter-spacing:1.41px">Balloons Www.uprooted.design</div>
<div class="lay" id="l3" style="left:2349px;top:879px;letter-spacing:1.38px">Dress Www.uprooted.design</div>
<div class="lay" id="l4" style="left:2349px;top:1042px;letter-spacing:1.29px">Bridesmaids Www.uprooted.de...</div>
<div class="abs" style="left:2159px;top:1569px;width:841px;height:141px;background:#f4f4f4"></div>
<div class="abs" style="left:2188px;top:1589px;width:148px;height:101px;border:2.5px solid #4a4a4a;border-radius:6px;background:#fff"></div>
<div class="t" id="p_bc" style="left:2364px;top:1624px;font-size:28px;color:#111;letter-spacing:0.27px">Blank Canvas</div>
<div class="act" id="a1" style="left:2203px;top:1795px;letter-spacing:1.00px">Slice</div>
<div class="act" id="a2" style="left:2315px;top:1795px;letter-spacing:1.33px">Combine</div>
<div class="act" id="a3" style="left:2481.5px;top:1795px;letter-spacing:1.10px">Attach</div>
<div class="act" id="a4" style="left:2610px;top:1795px;letter-spacing:1.17px">Flatten</div>
<div class="act" id="a5" style="left:2747px;top:1795px;color:#111;letter-spacing:1.17px">Contour</div>
<div class="abs" style="left:2159px;top:1848px;width:841px;height:140px;background:#1c47c4;border-radius:0 0 11px 0"></div>
<div class="t" id="p_try" style="left:2318px;top:1900px;font-size:39px;color:#fff;-webkit-text-stroke:.4px #fff;letter-spacing:1.16px">Try Cricut Access for free</div>
<!-- ===== layer thumbnails ===== -->
<svg class="abs" style="left:0;top:0" width="3000" height="2501" viewBox="0 0 3000 2501">
<use href="#artArch" transform="translate(2168.5 406.1) scale(0.1100)"/>
<use href="#artBal" transform="translate(2236.2 655.6) scale(0.1024)"/>
<use href="#artDress" transform="translate(2227.0 722.0) scale(0.1234)"/>
<use href="#artBm" transform="translate(2172.5 977.9) scale(0.1026)"/>
</svg>
<!-- ===== icons overlay ===== -->
<svg class="abs" style="left:0;top:0" width="3000" height="2501" viewBox="0 0 3000 2501" fill="none" stroke-linecap="round" stroke-linejoin="round">
<!-- header: bell + chevron -->
<g stroke="#fff" stroke-width="4">
<path d="M1782 161 H1828 C1819 153 1820 146 1820 138 C1820 128 1814 121 1805 121 C1796 121 1790 128 1790 138 C1790 146 1791 153 1782 161 Z"/>
<path d="M1799 164 a6 6 0 0 0 12 0"/>
<path d="M1805 121 v-3"/>
<path d="M2514 140 L2531 157 L2548 140"/>
</g>
<!-- sidebar icons -->
<g stroke="#3f434b" stroke-width="3.6">
<circle cx="98" cy="282" r="26"/><path d="M84 282H112M98 268V296"/>
<!-- templates (t-shirt) -->
<path d="M86 451 C90 458 106 458 110 451 L125 463 L118 476 L112 472 V502 H84 V472 L78 476 L71 463 Z"/>
<path d="M91 466v-4h4M101 462h4v4M105 474v4h-4M95 478h-4v-4" stroke-width="2.6"/>
<!-- projects (card) -->
<path d="M79 662 a3 3 0 0 1 3 -3 H114 a3 3 0 0 1 3 3 V698 a3 3 0 0 1 -3 3 H82 a3 3 0 0 1 -3 -3 Z"/>
<path d="M80 659 L108 649 L111 658"/>
<path d="M98 682 l-7 -7 a4 4 0 0 1 7 -4 a4 4 0 0 1 7 4 Z" stroke-width="3"/>
<path d="M89 691H107"/>
<!-- shapes -->
<circle cx="109" cy="881" r="16.5"/>
<path d="M92 847 L112 881 H72 Z" fill="#cacaca"/>
<!-- images (balloon) -->
<ellipse cx="98" cy="1062" rx="18.5" ry="20.5"/><ellipse cx="98" cy="1062" rx="7.5" ry="20.5" stroke-width="3"/>
<path d="M84 1076 L91 1087 H105 L112 1076M91 1089 H105 L103 1096 H93 Z"/>
<!-- text -->
<path d="M80 1253 V1247 H117 V1253 M98.500 1247 V1284 M88 1284 H110"/>
<!-- phrases -->
<path d="M98 1436 C82 1436 72 1446 72 1459 C72 1472 82 1482 98 1482 C101 1482 104 1481.500 107 1480.500 C111 1484 116 1486 122 1485 C119 1482 117.500 1479 117 1475 C121.500 1471 124 1465.500 124 1459 C124 1446 114 1436 98 1436 Z"/>
<path d="M84 1455H112M84 1466H112"/>
<!-- editable images -->
<path d="M71 1628.500 L90 1612 L97 1637 Z" fill="#3f434b" stroke-width="2"/>
<circle cx="118" cy="1625" r="4.500"/><circle cx="118" cy="1661" r="4.500"/><circle cx="81" cy="1661" r="4.500"/>
<path d="M104 1625H113M118 1630V1656M86 1661H113M81 1645V1656"/>
<!-- upload -->
<path d="M80 1841 V1836 H118 V1841 M99 1877 V1849 M88 1860 L99 1849 L110 1860"/>
</g>
<!-- toolbar icons -->
<g stroke="#3f434b" stroke-width="3.6">
<path d="M259.500 274.500 L249.500 284 L259.500 293.500 M250 284 H281 a13 13 0 0 1 0 26 H266"/>
<path d="M392 274.500 L402 284 L392 293.500 M401.500 284 H370.500 a13 13 0 0 0 0 26 H385.500" stroke="#c6c8cc"/>
<!-- select all -->
<path d="M926 298 V294 a6 6 0 0 1 6 -6 H936 M942 288 H954 M960 288 H964 a6 6 0 0 1 6 6 V298 M970 304 V314 M926 304 V316 M926 322 V325 a6 6 0 0 0 6 6 H935 M941 331 H952"/>
<circle cx="939.500" cy="301.500" r="3.800"/><circle cx="956" cy="301.500" r="3.800"/><circle cx="939.500" cy="318" r="3.800"/>
<path d="M951 312.500 L968.500 318.300 L960.700 321.300 L956.800 329.500 Z" fill="#3f434b" stroke-width="1.500"/>
<!-- pencil -->
<path d="M1063 313 L1086.500 290.500 a7 7 0 0 1 10 0.500 a7 7 0 0 1 0 10 L1072 324 L1058 328.500 Z M1063 313 L1072 324"/>
<!-- align (disabled) -->
<g stroke="#cdced1"><path d="M1223 292 V327"/><rect x="1232.500" y="301.500" width="26" height="15.500" rx="5"/></g>
<!-- arrange -->
<rect x="1362" y="300.500" width="18" height="17.500" stroke-linejoin="miter"/>
<path d="M1356 306.500 H1352.500 V291 H1368 V294.500 M1386 311.500 H1389.500 V327.500 H1374 V324" stroke-linejoin="miter" stroke-linecap="butt"/>
<!-- flip -->
<path d="M1497.300 292 V327.600 H1485 Z M1508.200 292 V327.600 H1520.500 Z" stroke-linejoin="miter"/>
<!-- offset -->
<path d="M1665.800 301 L1677.500 309.500 L1673 320.300 H1658.600 L1654 309.500 Z" stroke-linejoin="miter"/>
<path d="M1665.800 288.500 L1686.300 306 L1678.500 329.800 H1653 L1645.200 306 Z" stroke-dasharray="6.500 5" stroke-width="3.400"/>
</g>
<!-- panel icons -->
<g stroke="#e0e0e0" stroke-width="3.600" stroke-linejoin="miter" stroke-linecap="butt">
<path d="M2214.500 404 V395.500 H2223 M2253 395.500 H2261.500 V404 M2261.500 434 V442.500 H2253 M2223 442.500 H2214.500 V434"/>
<rect x="2224" y="404" width="19" height="19" rx="2"/><rect x="2234" y="415" width="19" height="19" rx="2" fill="#fff"/>
</g>
<g stroke="#3a3a3a" stroke-width="4" stroke-linejoin="miter" stroke-linecap="butt">
<path d="M2337 431 H2328 V397 H2362 V406"/>
<rect x="2339" y="408" width="34.500" height="34" rx="1.500"/>
<path d="M2347 425 H2365.500 M2356.300 416 V434"/>
<path d="M2437 404 H2489" stroke-linecap="round"/>
<path d="M2454.500 403 V396.500 H2471.500 V403"/>
<path d="M2442.500 406 L2446.500 437 a6 6 0 0 0 6 5.500 H2473.500 a6 6 0 0 0 6 -5.500 L2483.500 406"/>
<path d="M2456.700 415.500 V432 M2469.300 415.500 V432"/>
</g>
<!-- action icons (disabled) -->
<g stroke="#bdbdbd" stroke-width="4">
<path d="M2216 1757 A15.500 15.500 0 1 1 2241 1738"/>
<path d="M2229 1773.500 H2257.500 V1745.500 H2246"/>
<path d="M2230 1747 H2247 C2247 1755 2241 1761 2230 1762.500 Z"/>
<rect x="2338" y="1730" width="28" height="27.500" rx="1.500"/><circle cx="2367" cy="1759" r="15"/>
<path d="M2401 1746.500 h20 l-10 10 Z" fill="#bdbdbd" stroke="none"/>
<path d="M2538 1752 H2512 a5.500 5.500 0 0 0 0 11.500 H2537.500 a12.500 12.500 0 0 0 0 -25 H2510 a12.500 12.500 0 0 0 0 25" transform="translate(0 0)"/>
<path d="M2656.700 1726 V1742 M2649 1735.500 L2656.700 1743 L2664.500 1735.500"/>
<path d="M2642 1741.500 L2634 1747 L2656.700 1760 L2679.500 1747 L2671.500 1741.500 M2634 1760 L2656.700 1774 L2679.500 1760"/>
</g>
<circle cx="2801.700" cy="1751.700" r="26" stroke="#111" stroke-width="4" stroke-dasharray="11 7.150" stroke-linecap="butt"/>
<!-- access tag -->
<path d="M2204 1887.500 H2294 L2272 1945.500 H2204 Z" fill="#17a572"/>
<path d="M2205.500 1946.500 H2221.500 V1961.500 Z" fill="#0e9358"/>
<text x="2242.500" y="1930" text-anchor="middle" font-family="Liberation Sans, sans-serif" font-size="50" fill="#eafff6" stroke="#eafff6" stroke-width="1.2" textLength="26" lengthAdjust="spacingAndGlyphs">a</text>
</svg>
<!-- ===== caption ===== -->
<div class="t cap" id="w1" style="left:463px;top:2068px;letter-spacing:-5.00px">SVG</div>
<div class="t cap" id="w2" style="left:794px;top:2068px;letter-spacing:0.00px">fil<i>e</i>s</div>
<div class="t cap" id="w3" style="left:1101px;top:2068px;letter-spacing:3.75px"><i>are</i></div>
<div class="t cap" id="w4" style="left:1353px;top:2068px;letter-spacing:1.67px"><i>ea</i>sy</div>
<div class="t cap" id="w5" style="left:1679px;top:2068px;letter-spacing:-7.50px">to</div>
<div class="t cap" id="w6" style="left:1832px;top:2068px;letter-spacing:7.85px"><i>u</i>s<i>e</i></div>
<div class="t cap" id="w7" style="left:2095.6px;top:2068px;letter-spacing:-5.30px">in</div>
<div class="t cap" id="w8" style="left:2247px;top:2068px;letter-spacing:4.00px">y<i>ou</i>r</div>
<div class="t cap" id="w9" style="left:269px;top:2244px;letter-spacing:-0.43px">f<i>a</i>v<i>o</i>rit<i>e</i></div>
<div class="t cap" id="w10" style="left:788px;top:2244px;letter-spacing:-2.29px"><i>e</i>diting,</div>
<div class="t cap" id="w11" style="left:1270px;top:2244px;letter-spacing:-1.00px">cut,</div>
<div class="t cap" id="w12" style="left:1535px;top:2244px;letter-spacing:-4.00px"><i>or</i></div>
<div class="t cap" id="w13" style="left:1716px;top:2244px;letter-spacing:0.60px">d<i>e</i>sign</div>
<div class="t cap" id="w14" style="left:2155px;top:2244px;letter-spacing:3.29px">pr<i>o</i>gr<i>a</i>m.</div>
</body>
</html>
